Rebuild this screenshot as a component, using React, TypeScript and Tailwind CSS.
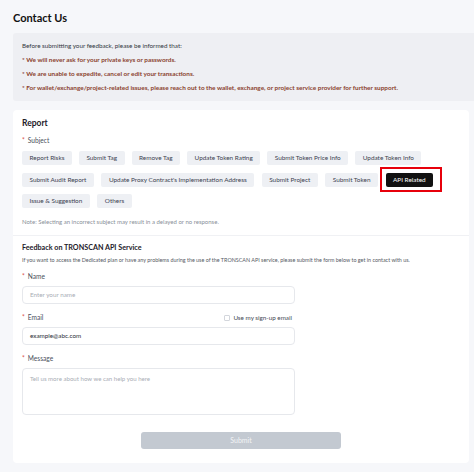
import React from "react";

const tagsRow1 = ["Report Risks", "Submit Tag", "Remove Tag", "Update Token Rating", "Submit Token Price Info", "Update Token Info"];
const tagsRow2 = ["Submit Audit Report", "Update Proxy Contract's Implementation Address", "Submit Project", "Submit Token"];
const tagsRow3 = ["Issue & Suggestion", "Others"];

function Tag({ label }: { label: string }) {
  return (
    <div className="h-[14px] px-[7.5px] flex items-center rounded-[2px] bg-[#eef0f4] text-[6.4px] text-[#3c4250] whitespace-nowrap">
      {label}
    </div>
  );
}

function Label({ text }: { text: string }) {
  return (
    <div className="flex items-center gap-[3px] text-[6.6px] text-[#4a4f5a] h-[10px]">
      <span className="text-[#d9534f]">*</span>
      <span>{text}</span>
    </div>
  );
}

export default function App() {
  return (
    <div className="w-[474px] h-[472px] overflow-hidden bg-[#f6f7fa] pl-[13px]" style={{ fontFamily: "Lato, 'Noto Sans', sans-serif" }}>
      <div className="h-[33px] flex items-center pt-[1px]">
        <h1 className="text-[11px] font-bold text-[#111] leading-none">Contact Us</h1>
      </div>
      <div className="h-[68px] bg-[#eeeff3] rounded-l-[3px] pl-[9px] pt-[6px] flex flex-col">
        <div className="h-[14px] flex items-center text-[6.3px] text-[#333842]">Before submitting your feedback, please be informed that:</div>
        <div className="h-[14px] flex items-center text-[6.4px] font-bold text-[#8a3f2e]">* We will never ask for your private keys or passwords.</div>
        <div className="h-[14px] flex items-center text-[6.4px] font-bold text-[#8a3f2e]">* We are unable to expedite, cancel or edit your transactions.</div>
        <div className="h-[14px] flex items-center text-[6.4px] font-bold text-[#8a3f2e]">* For wallet/exchange/project-related issues, please reach out to the wallet, exchange, or project service provider for further support.</div>
      </div>
      <div className="mt-[9px] mr-[5px] h-[353px] bg-white rounded-[4px]">
        <div className="px-[9px] border-b border-[#f0f1f4] pb-[9px]">
          <div className="h-[26px] flex items-center pt-[1px] text-[8.5px] font-bold text-[#1d2029]">Report</div>
          <Label text="Subject" />
          <div className="mt-[5px] flex gap-[7px]">
            {tagsRow1.map((t) => (
              <Tag key={t} label={t} />
            ))}
          </div>
          <div className="mt-[8px] flex gap-[7.5px] items-center">
            {tagsRow2.map((t) => (
              <Tag key={t} label={t} />
            ))}
            <div className="relative">
              <div className="absolute -left-[6px] -top-[6px] -right-[9px] -bottom-[5px] border-2 border-red-600" />
              <div className="h-[14px] px-[7.5px] flex items-center rounded-[2px] bg-[#111] text-[6.4px] text-white whitespace-nowrap">API Related</div>
            </div>
          </div>
          <div className="mt-[7px] flex gap-[7.5px]">
            {tagsRow3.map((t) => (
              <Tag key={t} label={t} />
            ))}
          </div>
          <div className="mt-[8px] h-[10px] flex items-center text-[6px] text-[#8a8f99]">
            Note: Selecting an incorrect subject may result in a delayed or no response.
          </div>
        </div>
        <div className="px-[9px]">
          <div className="mt-[6px] h-[12px] flex items-center text-[7.2px] font-bold text-[#1d2029]">Feedback on TRONSCAN API Service</div>
          <div className="h-[12px] flex items-center text-[5.4px] text-[#555a64] whitespace-nowrap">
            If you want to access the Dedicated plan or have any problems during the use of the TRONSCAN API service, please submit the form below to get in contact with us.
          </div>
          <div className="mt-[6px]">
            <Label text="Name" />
          </div>
          <div className="mt-[4px] w-[273px] h-[18px] border border-[#e6e8ec] rounded-[4px] flex items-center px-[7px] text-[6.3px] text-[#a9adb5]">
            Enter your name
          </div>
          <div className="mt-[9px] w-[273px] flex items-center justify-between">
            <Label text="Email" />
            <div className="flex items-center gap-[3px] pr-[3px] text-[6.3px] text-[#444954]">
              <span className="w-[6px] h-[6px] border border-[#d3d6dc] rounded-[1px] bg-white" />
              <span>Use my sign-up email</span>
            </div>
          </div>
          <div className="mt-[4px] w-[273px] h-[18px] border border-[#e6e8ec] rounded-[4px] flex items-center px-[7px] text-[6.3px] text-[#2a2e36]">
            example@abc.com
          </div>
          <div className="mt-[9px]">
            <Label text="Message" />
          </div>
          <div className="mt-[4px] w-[273px] h-[47px] border border-[#e6e8ec] rounded-[4px] px-[7px] pt-[5px] text-[6.1px] text-[#a9adb5]">
            Tell us more about how we can help you here
          </div>
          <div className="mt-[17px] flex">
            <div className="ml-[119px] w-[200px] h-[17px] rounded-[3px] bg-[#c3c9d1] flex items-center justify-center text-[7px] text-[#f3f4f6]">
              Submit
            </div>
          </div>
        </div>
      </div>
    </div>
  );
}
